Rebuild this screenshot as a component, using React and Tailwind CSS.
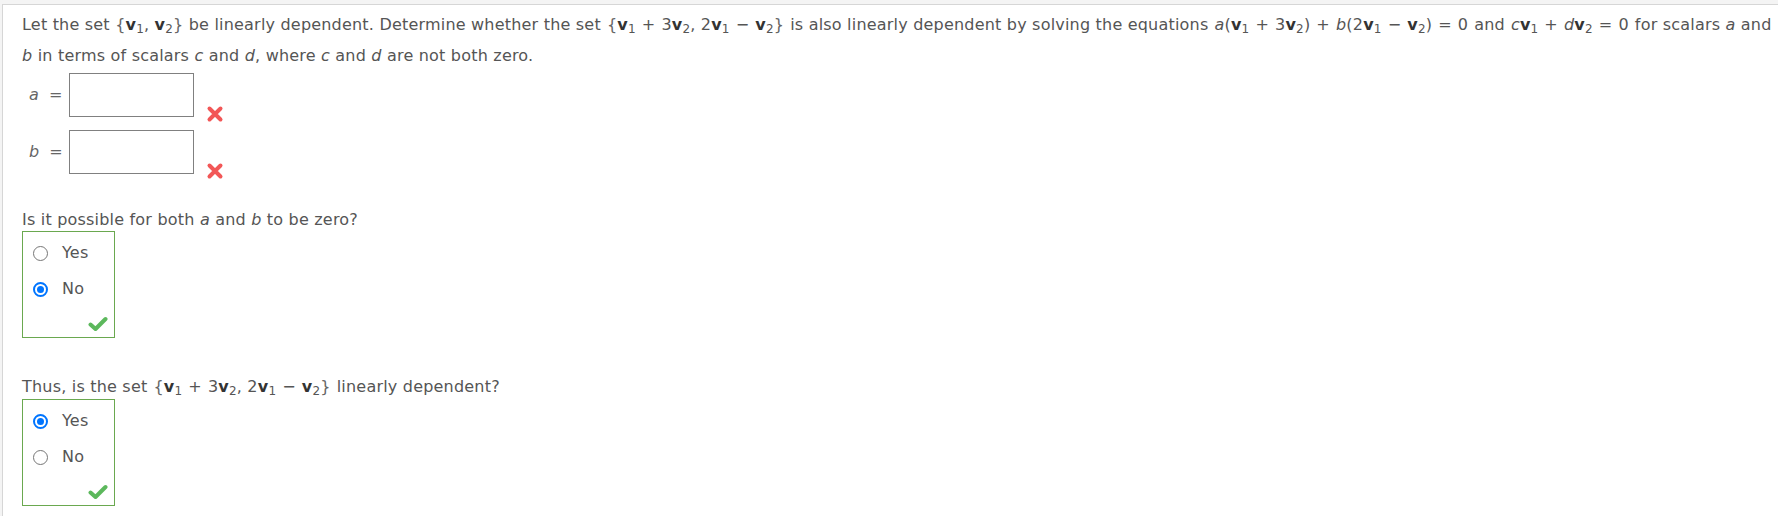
import React from 'react';

// bold vector with subscript
const V = ({ n }) => (
    <>
        <span className="font-bold text-[#333]">v</span>
        <sub>{n}</sub>
    </>
);

const I = ({ children }) => <span className="italic">{children}</span>;

const Brace = ({ children }) => <span className="text-[#666]">{children}</span>;

// operator with a bit more room, like typeset math
const Op = ({ children }) => <span className="mx-[6px]">{children}</span>;

const Math = ({ children }) => <span className="mx-[6px]">{children}</span>;

const SetExpr = () => (
    <Math>
        <Brace>{'{'}</Brace>
        <V n="1" /><Op>+</Op>3<V n="2" />, 2<V n="1" /><Op>−</Op><V n="2" />
        <Brace>{'}'}</Brace>
    </Math>
);

const WrongMark = () => (
    <svg width="18" height="18" viewBox="0 0 18 18" className="shrink-0">
        <path d="M3.5 3.5 L14.5 14.5 M14.5 3.5 L3.5 14.5" stroke="#f25757" strokeWidth="4" strokeLinecap="round" />
    </svg>
);

const CheckMark = () => (
    <svg width="20" height="16" viewBox="0 0 20 16">
        <path d="M2.5 8.5 L7.5 13 L17.5 3" fill="none" stroke="#5cb85c" strokeWidth="4" strokeLinecap="round" strokeLinejoin="round" />
    </svg>
);

const Radio = ({ checked }) =>
    checked ? (
        <span className="w-[15px] h-[15px] rounded-full border-[2px] border-[#0075ff] bg-white flex items-center justify-center shrink-0">
            <span className="w-[7px] h-[7px] rounded-full bg-[#0075ff]" />
        </span>
    ) : (
        <span className="w-[15px] h-[15px] rounded-full border border-[#767676] bg-white shrink-0" />
    );

const AnswerRow = ({ label, value }) => (
    <div className="flex items-end h-[44px] mb-[13px]">
        <span className="w-[47px] pl-[7px] text-[#666] flex gap-[10px] self-center">
            <I>{label}</I>
            <span>=</span>
        </span>
        <input
            type="text"
            readOnly
            value={value}
            className="w-[125px] h-[44px] border border-[#808080] bg-white outline-none"
        />
        <span className="ml-[12px] mb-[-6px]">
            <WrongMark />
        </span>
    </div>
);

const Choices = ({ selected }) => (
    <div className="w-[93px] h-[107px] border border-[#6aa84f] pt-[3px] pl-[10px] pr-[6px] flex flex-col">
        {['Yes', 'No'].map((opt) => (
            <div key={opt} className="h-[36px] flex items-center gap-[14px]">
                <Radio checked={selected === opt} />
                <span>{opt}</span>
            </div>
        ))}
        <div className="h-[28px] pt-[6px] flex items-center justify-end">
            <CheckMark />
        </div>
    </div>
);

const App = () => {
    return (
        <div className="bg-[#f4f4f4] pt-[4px] min-h-[516px] text-[16px] tracking-[0.2px] text-[#555]" style={{ fontFamily: '"DejaVu Sans", Verdana, sans-serif' }}>
            <div className="ml-[2px] bg-white border-t border-l border-[#d6d6d6] min-h-[512px] pl-[19px] pt-[4px]">
                {/* question text */}
                <div className="leading-[31px]">
                    <div className="whitespace-nowrap">
                        Let the set <Brace>{'{'}</Brace><V n="1" />, <V n="2" /><Brace>{'}'}</Brace> be linearly dependent. Determine whether the set
                        <SetExpr />
                        is also linearly dependent by solving the equations
                        <Math>
                            <I>a</I>(<V n="1" /><Op>+</Op>3<V n="2" />)<Op>+</Op><I>b</I>(2<V n="1" /><Op>−</Op><V n="2" />)<Op>=</Op>0
                        </Math>
                        and
                        <Math>
                            <I>c</I><V n="1" /><Op>+</Op><I>d</I><V n="2" /><Op>=</Op>0
                        </Math>
                        for scalars <I>a</I> and
                    </div>
                    <div>
                        <I>b</I> in terms of scalars <I>c</I> and <I>d</I>, where <I>c</I> and <I>d</I> are not both zero.
                    </div>
                </div>

                <div className="mt-[2px]">
                    <AnswerRow label="a" value="" />
                    <AnswerRow label="b" value="" />
                </div>

                <div className="mt-[34px] leading-[24px]">
                    Is it possible for both <I>a</I> and <I>b</I> to be zero?
                </div>
                <div className="-mt-[1px]">
                    <Choices selected="No" />
                </div>

                <div className="mt-[37px] leading-[24px]">
                    Thus, is the set
                    <SetExpr />
                    linearly dependent?
                </div>
                <div className="mt-0">
                    <Choices selected="Yes" />
                </div>
            </div>
        </div>
    );
};

export default App;
